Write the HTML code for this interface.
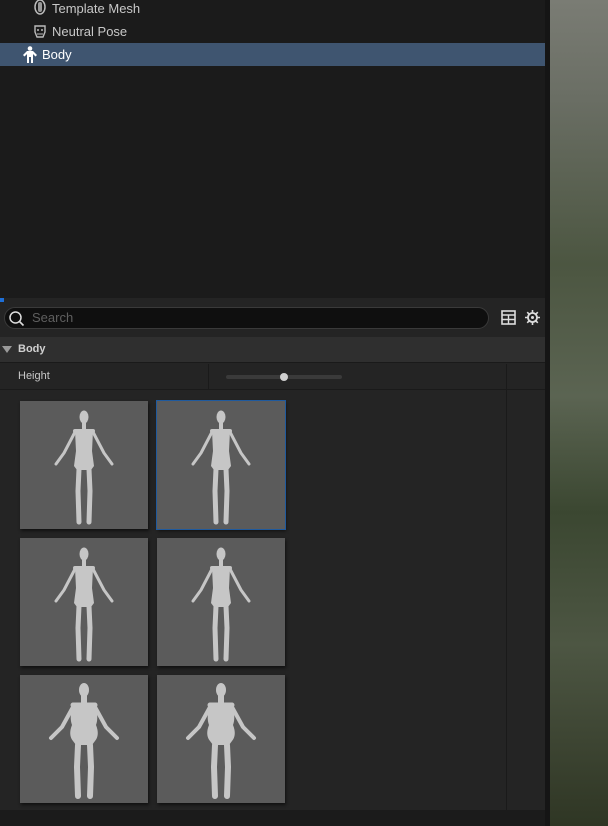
<!DOCTYPE html>
<html><head><meta charset="utf-8"><style>
*{margin:0;padding:0;box-sizing:border-box}
body{width:608px;height:826px;overflow:hidden;background:#1b1b1b;font-family:"Liberation Sans",sans-serif;position:relative}
.bg{position:absolute;left:550px;top:0;width:58px;height:826px;background:linear-gradient(180deg,#7a7c74 0%,#6a6e64 12%,#4c5641 32%,#5b6452 48%,#3b4731 62%,#4d5643 78%,#2f3624 100%)}
.gap{position:absolute;left:545px;top:0;width:5px;height:826px;background:#151515}
.t{position:absolute;color:#c8c8c8;font-size:13px}
.sel{position:absolute;left:0;top:43px;width:545px;height:23px;background:#3f5570}
.panel{position:absolute;left:0;top:298px;width:545px;height:512px;background:#242424}
.search{position:absolute;left:4px;top:307px;width:485px;height:22px;border-radius:11px;background:#0f0f0f;border:1px solid #3a3a3a}
.hdr{position:absolute;left:0;top:337px;width:545px;height:26px;background:#2f2f2f;border-bottom:1px solid #1a1a1a}
.row{position:absolute;left:0;top:364px;width:545px;height:26px;border-bottom:1px solid #1a1a1a}
.tile{position:absolute;width:128px;height:128px;background:#5b5b5b;box-shadow:1px 2px 3px #111}
.tile svg{position:absolute;left:0;top:0}
</style></head><body>
<div class="bg"></div><div class="gap"></div>
<svg style="position:absolute;left:32px;top:0" width="16" height="16"><ellipse cx="8" cy="7" rx="5" ry="7" fill="none" stroke="#bbb" stroke-width="1.5"/><rect x="6" y="2" width="4" height="10" rx="2" fill="#999"/></svg>
<div class="t" style="left:52px;top:1px">Template Mesh</div>
<svg style="position:absolute;left:32px;top:23px" width="16" height="16"><path d="M3 3h10v6l-2 5H5L3 9z" fill="none" stroke="#bbb" stroke-width="1.4"/><circle cx="6" cy="7" r="1" fill="#bbb"/><circle cx="10" cy="7" r="1" fill="#bbb"/><path d="M5 11h6" stroke="#bbb"/></svg>
<div class="t" style="left:52px;top:24px">Neutral Pose</div>
<div class="sel"></div>
<svg style="position:absolute;left:22px;top:46px" width="16" height="17"><circle cx="8" cy="2.5" r="2.3" fill="#fff"/><path d="M1 9l4-4h6l4 4-1.5 1.5L11 8v9H9v-6H7v6H5V8l-2.5 2.5z" fill="#fff"/></svg>
<div class="t" style="left:42px;top:47px;color:#fff">Body</div>
<div class="panel"></div>
<div style="position:absolute;left:0;top:298px;width:4px;height:4px;background:#1e6fd8"></div>
<div class="search"></div>
<svg style="position:absolute;left:8px;top:310px" width="18" height="18"><circle cx="7.5" cy="7.5" r="5.5" fill="none" stroke="#ddd" stroke-width="1.5"/><path d="M11.5 11.5l4 4" stroke="#ddd" stroke-width="1.6"/></svg>
<div class="t" style="left:32px;top:310px;color:#5f5f5f">Search</div>
<svg style="position:absolute;left:501px;top:310px" width="15" height="15"><rect x="1" y="1" width="13" height="13" fill="none" stroke="#ddd" stroke-width="1.6"/><path d="M1 5h13M1 9.5h13M7.5 5v9" stroke="#ddd" stroke-width="1.4"/></svg>
<svg style="position:absolute;left:524px;top:309px" width="17" height="17"><circle cx="8.5" cy="8.5" r="4.5" fill="none" stroke="#ddd" stroke-width="1.8"/><circle cx="8.5" cy="8.5" r="1.5" fill="#ddd"/><path d="M8.5 1v3M8.5 13v3M1 8.5h3M13 8.5h3M3.2 3.2l2 2M11.8 11.8l2 2M3.2 13.8l2-2M11.8 5.2l2-2" stroke="#ddd" stroke-width="1.6"/></svg>
<div class="hdr"></div>
<svg style="position:absolute;left:2px;top:346px" width="10" height="8"><path d="M0 0h10L5 7z" fill="#9a9a9a"/></svg>
<div class="t" style="left:18px;top:343px;font-size:11px;font-weight:bold;color:#d0d0d0">Body</div>
<div class="row"></div>
<div class="t" style="left:18px;top:370px;font-size:11px">Height</div>
<div style="position:absolute;left:208px;top:364px;width:1px;height:26px;background:#1a1a1a"></div>
<div style="position:absolute;left:506px;top:364px;width:1px;height:446px;background:#1a1a1a"></div>
<div style="position:absolute;left:226px;top:375px;width:116px;height:4px;border-radius:2px;background:#3a3a3a"></div>
<div style="position:absolute;left:280px;top:373px;width:8px;height:8px;border-radius:4px;background:#cfcfcf"></div>
<svg width="0" height="0" style="position:absolute"><defs>
<g id="fig" fill="#c6c6c6" stroke="#c6c6c6" stroke-linecap="round" stroke-linejoin="round">
<ellipse cx="64" cy="16" rx="4.5" ry="6.5" stroke="none"/>
<path d="M62 21h4v8h-4z" stroke="none"/>
<path d="M55 30h18" stroke-width="4"/>
<path d="M55 31L44 52 36 63M73 31l11 21 8 11" stroke-width="3" fill="none"/>
<path d="M55 30l1 20-2 15 3 4h14l3-4-2-15 1-20z" stroke="none"/>
<path d="M59 68l-1 22 1 31M69 68l1 22-1 31" stroke-width="5" fill="none"/>
</g>
<g id="fat" fill="#c6c6c6" stroke="#c6c6c6" stroke-linecap="round" stroke-linejoin="round">
<ellipse cx="64" cy="15" rx="5" ry="7" stroke="none"/>
<path d="M61 20h6v9h-6z" stroke="none"/>
<path d="M53 30h22" stroke-width="5"/>
<path d="M53 32L42 52 31 63M75 32l11 20 11 11" stroke-width="4" fill="none"/>
<path d="M53 30q-4 12-1 20q-4 10 1 16l3 4h16l3-4q5-6 1-16q3-8-1-20z" stroke="none"/>
<path d="M58 70l-1 22 1 29M70 70l1 22-1 29" stroke-width="6" fill="none"/>
</g>
</defs></svg>
<div class="tile" style="left:20px;top:401px"><svg width="128" height="128"><use href="#fig"/></svg></div>
<div class="tile" style="left:157px;top:401px;outline:1px solid #1f5a9e"><svg width="128" height="128"><use href="#fig"/></svg></div>
<div class="tile" style="left:20px;top:538px"><svg width="128" height="128"><use href="#fig"/></svg></div>
<div class="tile" style="left:157px;top:538px"><svg width="128" height="128"><use href="#fig"/></svg></div>
<div class="tile" style="left:20px;top:675px"><svg width="128" height="128"><use href="#fat"/></svg></div>
<div class="tile" style="left:157px;top:675px"><svg width="128" height="128"><use href="#fat"/></svg></div>
</body></html>
